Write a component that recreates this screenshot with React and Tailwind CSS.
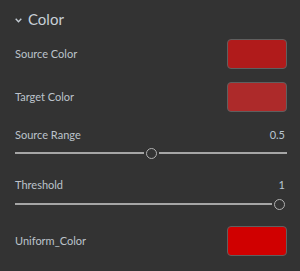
import React from 'react';

const font = { fontFamily: 'Lato, "Noto Sans", sans-serif' };

function Swatch({ color }) {
  return (
    <div
      className="w-[60px] h-[30px] rounded-[4px] border border-[#5f5f5f]"
      style={{ backgroundColor: color }}
    />
  );
}

function ColorRow({ label, color }) {
  return (
    <div className="flex items-center justify-between h-[30px]">
      <span className="text-[11px] text-[#bcc3cb]">{label}</span>
      <Swatch color={color} />
    </div>
  );
}

function Slider({ label, value, full }) {
  return (
    <div>
      <div className="flex items-center justify-between h-[14px] text-[11px]">
        <span className="text-[#bcc3cb]">{label}</span>
        <span className="text-[#b9c6d2] pr-[2px]">{value}</span>
      </div>
      <div className={`flex items-center h-[12px] ${full ? 'mt-[6px]' : 'mt-[5px]'}`}>
        <div className="flex-1 h-[2px] bg-[#a6a6a6]" />
        <div className="w-[11px] h-[11px] rounded-full border-[1.5px] border-[#b0b0b0] mx-[2px] shrink-0" />
        {!full && <div className="flex-1 h-[2px] bg-[#a6a6a6]" />}
      </div>
    </div>
  );
}

export default function App() {
  return (
    <div className="w-[300px] h-[271px] bg-[#333333] pl-[15px] pr-[13px]" style={font}>
      {/* header */}
      <div className="flex items-center h-[39px] gap-[6px]">
        <svg width="7" height="5" viewBox="0 0 7 5" className="mt-[1px]">
          <path d="M0.7 0.8 L3.5 3.7 L6.3 0.8" fill="none" stroke="#c4ccd4" strokeWidth="1.4" />
        </svg>
        <span className="text-[15px] text-[#c8d0d8]">Color</span>
      </div>

      <ColorRow label="Source Color" color="#b01b1b" />
      <div className="mt-[13px]">
        <ColorRow label="Target Color" color="#ad2a2a" />
      </div>

      <div className="mt-[16px]">
        <Slider label="Source Range" value="0.5" />
      </div>
      <div className="mt-[19px]">
        <Slider label="Threshold" value="1" full />
      </div>

      <div className="mt-[16px]">
        <ColorRow label="Uniform_Color" color="#d00000" />
      </div>
    </div>
  );
}
